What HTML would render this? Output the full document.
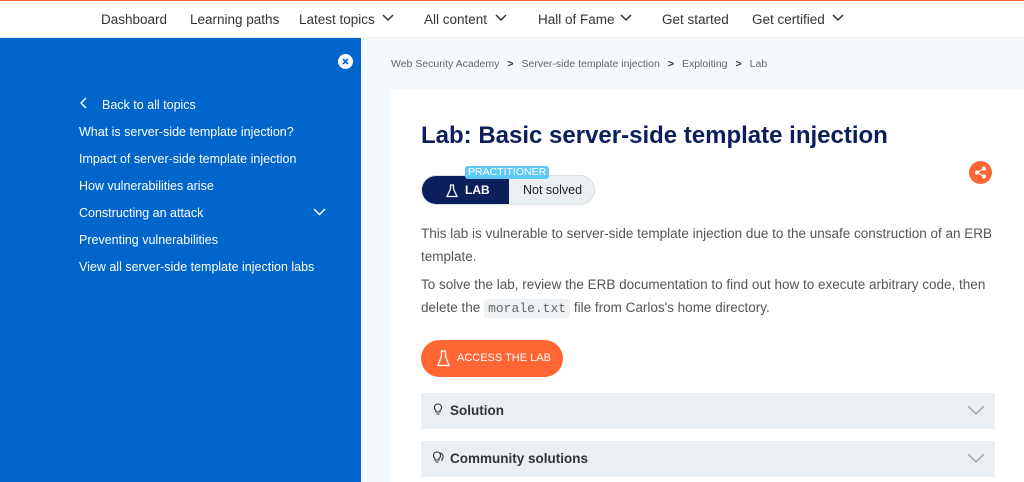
<!DOCTYPE html>
<html><head><meta charset="utf-8"><style>
*{margin:0;padding:0;box-sizing:border-box}
body{width:1024px;height:482px;overflow:hidden;font-family:"Liberation Sans",Arial,sans-serif;background:#f3f9fc;position:relative}
.top{position:absolute;left:0;top:0;width:1024px;height:38px;background:#fff;border-top:1px solid #ff6633;border-bottom:1px solid #e8e8e8}
.top span{position:absolute;top:11px;font-size:13.5px;color:#333}
.chev{position:absolute;top:12px}
.side{position:absolute;left:0;top:38px;width:361px;height:444px;background:#0066cc;color:#fff}
.side a{position:absolute;left:79px;font-size:12.5px;color:#fff}
.close{position:absolute;left:338px;top:54px;width:15px;height:15px;border-radius:50%;background:#fff}
.bc{position:absolute;left:391px;top:58px;font-size:10.5px;color:#666}
.bc b{margin:0 8px;color:#333}
.card{position:absolute;left:391px;top:89px;width:633px;height:393px;background:#fff}
h1{position:absolute;left:421px;top:122px;font-size:24px;color:#0a1f5c;font-weight:bold}
.pill{position:absolute;left:421px;top:175px;width:174px;height:30px;border-radius:15px;background:#eaeff2;border:1px solid #d8dee2;overflow:hidden}
.pill .l{position:absolute;left:0;top:0;width:87px;height:30px;background:#0a1f5c;color:#fff;font-weight:bold;font-size:12px;line-height:29px;padding-left:43px}
.pill .r{position:absolute;left:101px;top:7px;font-size:12.5px;color:#222}
.prac{position:absolute;left:465px;top:166px;height:13px;padding:0 3px;background:#5ec8f6;color:#fff;font-size:10.5px;line-height:13px;border-radius:3px}
p{position:absolute;left:421px;font-size:13.5px;color:#555;line-height:23px;width:580px}
code{font-family:"Liberation Mono",monospace;font-size:13px;background:#eef2f4;color:#666;padding:2px 4px;border-radius:3px}
.btn{position:absolute;left:421px;top:340px;width:142px;height:37px;border-radius:19px;background:#ff6633;color:#fff;font-size:11px;line-height:37px;padding-left:36px}
.acc{position:absolute;left:421px;width:574px;height:36px;background:#e9eff2;font-weight:bold;font-size:13.5px;color:#333;line-height:36px;padding-left:29px}
.acc svg.c{position:absolute;right:10px;top:12px}
.share{position:absolute;left:969px;top:161px;width:23px;height:23px;border-radius:50%;background:#ff6633}
</style></head><body>
<div class="top">
<span style="left:101px">Dashboard</span>
<span style="left:190px">Learning paths</span>
<span style="left:299px">Latest topics</span>
<svg class="chev" style="left:382px" width="12" height="10"><path d="M1 2l5 5 5-5" stroke="#333" stroke-width="1.5" fill="none"/></svg>
<span style="left:424px">All content</span>
<svg class="chev" style="left:495px" width="12" height="10"><path d="M1 2l5 5 5-5" stroke="#333" stroke-width="1.5" fill="none"/></svg>
<span style="left:538px">Hall of Fame</span>
<svg class="chev" style="left:620px" width="12" height="10"><path d="M1 2l5 5 5-5" stroke="#333" stroke-width="1.5" fill="none"/></svg>
<span style="left:662px">Get started</span>
<span style="left:752px">Get certified</span>
<svg class="chev" style="left:832px" width="12" height="10"><path d="M1 2l5 5 5-5" stroke="#333" stroke-width="1.5" fill="none"/></svg>
</div>
<div class="side">
<div class="close" style="top:16px"><svg width="15" height="15"><path d="M5 5l5 5M10 5l-5 5" stroke="#0066cc" stroke-width="1.6"/></svg></div>
<svg style="position:absolute;left:80px;top:59px" width="8" height="12"><path d="M6 1L1 6l5 5" stroke="#fff" stroke-width="1.5" fill="none"/></svg>
<a style="left:102px;top:60px">Back to all topics</a>
<a style="top:87px">What is server-side template injection?</a>
<a style="top:114px">Impact of server-side template injection</a>
<a style="top:141px">How vulnerabilities arise</a>
<a style="top:168px">Constructing an attack</a>
<svg style="position:absolute;left:313px;top:170px" width="13" height="9"><path d="M1 1l5.5 5.5L12 1" stroke="#fff" stroke-width="1.5" fill="none"/></svg>
<a style="top:195px">Preventing vulnerabilities</a>
<a style="top:222px">View all server-side template injection labs</a>
</div>
<div class="bc">Web Security Academy<b>&gt;</b>Server-side template injection<b>&gt;</b>Exploiting<b>&gt;</b>Lab</div>
<div class="card"></div>
<h1>Lab: Basic server-side template injection</h1>
<div class="share"><svg width="23" height="23"><g fill="#fff"><circle cx="15" cy="7.5" r="2"/><circle cx="8" cy="11.5" r="2"/><circle cx="15" cy="15.5" r="2"/></g><path d="M15 7.5L8 11.5 15 15.5" stroke="#fff" stroke-width="1.2" fill="none"/></svg></div>
<div class="pill"><div class="l">LAB</div><svg style="position:absolute;left:24px;top:8px" width="12" height="14"><path d="M4 1h4M4.5 1v4L1 12.5h10L7.5 5V1" stroke="#fff" stroke-width="1.3" fill="none"/></svg><div class="r">Not solved</div></div>
<div class="prac">PRACTITIONER</div>
<p style="top:222px">This lab is vulnerable to server-side template injection due to the unsafe construction of an ERB template.</p>
<p style="top:273px">To solve the lab, review the ERB documentation to find out how to execute arbitrary code, then delete the <code>morale.txt</code> file from Carlos's home directory.</p>
<div class="btn"><svg style="position:absolute;left:16px;top:10px" width="13" height="17"><path d="M4 1h5M4.5 1v5L1 15.5h11L8.5 6V1" stroke="#fff" stroke-width="1.3" fill="none"/></svg>ACCESS THE LAB</div>
<div class="acc" style="top:393px"><svg style="position:absolute;left:12px;top:10px" width="10" height="14"><path d="M5 1a3.5 3.5 0 0 0-2 6.4V9h4V7.4A3.5 3.5 0 0 0 5 1zM3.5 11h3" stroke="#333" stroke-width="1.1" fill="none"/></svg>Solution<svg class="c" width="18" height="11"><path d="M1 1l8 8 8-8" stroke="#aaa" stroke-width="1.6" fill="none"/></svg></div>
<div class="acc" style="top:441px"><svg style="position:absolute;left:11px;top:10px" width="14" height="14"><path d="M5 1a3.5 3.5 0 0 0-2 6.4V9h4V7.4A3.5 3.5 0 0 0 5 1zM3.5 11h3M8 2a3.5 3.5 0 0 1 2 6v2" stroke="#333" stroke-width="1.1" fill="none"/></svg>Community solutions<svg class="c" width="18" height="11"><path d="M1 1l8 8 8-8" stroke="#aaa" stroke-width="1.6" fill="none"/></svg></div>
</body></html>
